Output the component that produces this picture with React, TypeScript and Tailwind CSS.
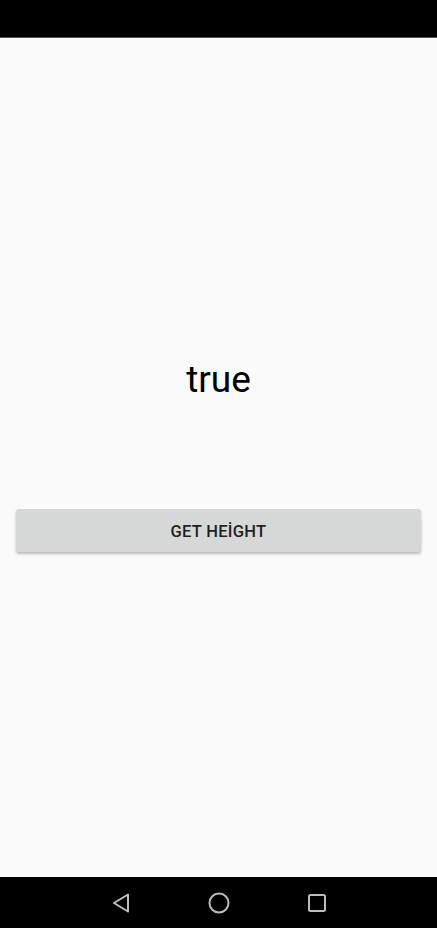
export default function App() {
  return (
    <div className="flex h-[928px] w-[437px] flex-col bg-[#fafafa] font-['Roboto',sans-serif]">
      {/* status bar */}
      <div className="h-[37px] shrink-0 bg-black" />
      <div className="h-px shrink-0 bg-[#555]" />

      <div className="flex flex-1 flex-col">
        <div className="h-[322px]" />
        <div className="text-center text-[37px] leading-[40px] text-black">true</div>
        <div className="h-[109px]" />
        <div className="px-4">
          <button className="h-[43px] w-full rounded-[3px] bg-[#d6d7d7] pt-[3px] text-[16.5px] font-medium tracking-[0.3px] text-[#1f1f1f] shadow-[0_2px_3px_rgba(0,0,0,0.25)]">
            GET HEİGHT
          </button>
        </div>
      </div>

      {/* nav bar */}
      <div className="flex h-[51px] shrink-0 items-center justify-center gap-[76px] bg-black">
        <svg width="22" height="22" viewBox="0 0 22 22" fill="none" stroke="#bdbdbd" strokeWidth="2" strokeLinejoin="round">
          <path d="M18 2.5 L4 11 L18 19.5 Z" />
        </svg>
        <svg width="22" height="22" viewBox="0 0 22 22" fill="none" stroke="#bdbdbd" strokeWidth="2">
          <circle cx="11" cy="11" r="9.5" />
        </svg>
        <svg width="22" height="22" viewBox="0 0 22 22" fill="none" stroke="#bdbdbd" strokeWidth="2">
          <rect x="3" y="3" width="16" height="16" rx="1.5" />
        </svg>
      </div>
    </div>
  );
}
